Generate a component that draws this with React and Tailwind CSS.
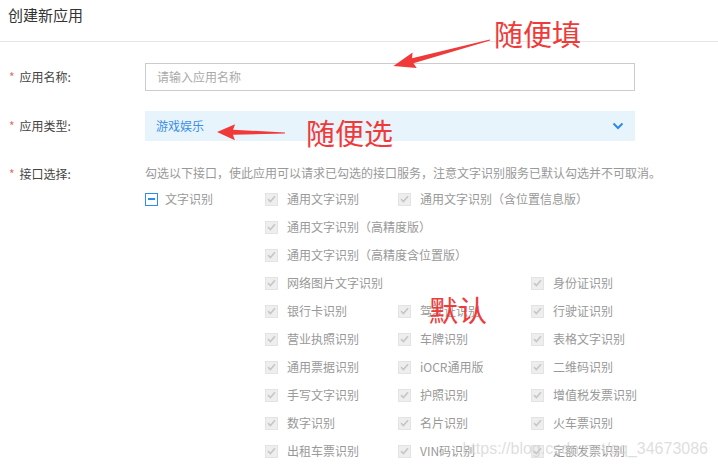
import React from 'react';

const rows = [
  ['通用文字识别', '通用文字识别（含位置信息版）', null],
  ['通用文字识别（高精度版）', null, null],
  ['通用文字识别（高精度含位置版）', null, null],
  ['网络图片文字识别', null, '身份证识别'],
  ['银行卡识别', '驾驶证识别', '行驶证识别'],
  ['营业执照识别', '车牌识别', '表格文字识别'],
  ['通用票据识别', 'iOCR通用版', '二维码识别'],
  ['手写文字识别', '护照识别', '增值税发票识别'],
  ['数字识别', '名片识别', '火车票识别'],
  ['出租车票识别', 'VIN码识别', '定额发票识别'],
];

const CheckedBox = () => (
  <span className="w-[13px] h-[13px] shrink-0 bg-[#eeeeee] border border-[#e3e3e3] flex items-center justify-center">
    <svg width="9" height="8" viewBox="0 0 9 8">
      <path d="M1 4.2 L3.4 6.5 L8 1.3" fill="none" stroke="#c6c6c6" strokeWidth="1.6" />
    </svg>
  </span>
);

// arrow drawn along +x from tail, then rotated into place
const Arrow = ({ x, y, len, angle, head = 20, half = 8 }) => (
  <polygon
    transform={`translate(${x} ${y}) rotate(${angle})`}
    points={`0,-0.6 ${len - head + 2},-2.6 ${len - head},-${half} ${len},0 ${len - head},${half} ${len - head + 2},2.6 0,0.6`}
    fill="#f03a3a"
  />
);

const Label = ({ children }) => (
  <div className="w-[136px] shrink-0 flex items-center text-[12px] text-[#444]">
    <span className="text-[#e96a6a] mr-[5px]">*</span>
    {children}
  </div>
);

export default function App() {
  return (
    <div className="relative w-[718px] h-[468px] overflow-hidden bg-white font-['Noto_Sans_CJK_SC',sans-serif]">
      {/* header */}
      <div className="h-[42px] border-b border-[#e6e6e6] flex items-center pl-[8px]">
        <h1 className="text-[15px] text-[#333] leading-none -mt-[12px]">创建新应用</h1>
      </div>

      <div className="pl-[9px]">
        {/* name */}
        <div className="flex mt-[21px] h-[28px]">
          <Label>应用名称:</Label>
          <div className="w-[490px] h-[28px] border border-[#cccccc] flex items-center px-[11px] text-[12px] text-[#aaa]">
            请输入应用名称
          </div>
        </div>

        {/* type */}
        <div className="flex mt-[20px] h-[30px]">
          <Label>应用类型:</Label>
          <div className="w-[490px] h-[30px] bg-[#e8f4fc] flex items-center justify-between pl-[11px] pr-[11px] text-[12px] text-[#3a8ee6]">
            <span>游戏娱乐</span>
            <svg width="12" height="8" viewBox="0 0 12 8">
              <path d="M1.5 1.5 L6 6 L10.5 1.5" fill="none" stroke="#2e8ae6" strokeWidth="2" />
            </svg>
          </div>
        </div>

        {/* apis */}
        <div className="flex mt-[22px]">
          <div className="h-[22px] flex">
            <Label>接口选择:</Label>
          </div>
          <div className="flex-1">
            <p className="text-[12px] leading-[20px] text-[#999] whitespace-nowrap">
              勾选以下接口，使此应用可以请求已勾选的接口服务，注意文字识别服务已默认勾选并不可取消。
            </p>
            <div className="flex mt-[2px]">
              <div className="w-[120px] shrink-0 h-[28px] flex items-center">
                <span className="w-[13px] h-[13px] border border-[#2d8cf0] bg-white flex items-center justify-center">
                  <span className="w-[7px] h-[2px] bg-[#2d8cf0]" />
                </span>
                <span className="ml-[7px] text-[12px] text-[#999]">文字识别</span>
              </div>
              <div>
                {rows.map((row, i) => (
                  <div key={i} className="flex h-[28px]">
                    {row.map((cell, j) => (
                      <div key={j} className="w-[133px] shrink-0 flex items-center whitespace-nowrap">
                        {cell && (
                          <>
                            <CheckedBox />
                            <span className="ml-[9px] text-[12px] text-[#999]">{cell}</span>
                          </>
                        )}
                      </div>
                    ))}
                  </div>
                ))}
              </div>
            </div>
          </div>
        </div>
      </div>

      {/* annotations */}
      <svg className="absolute inset-0 pointer-events-none" width="718" height="468">
        <Arrow x={490} y={40} len={100} angle={165} head={22} half={8} />
        <Arrow x={285} y={133} len={68} angle={180.8} head={18} half={8} />
      </svg>
      <span className="absolute left-[494px] top-[13px] text-[29px] leading-[40px] text-[#f03a3a]">随便填</span>
      <span className="absolute left-[306px] top-[112px] text-[29px] leading-[40px] text-[#f03a3a]">随便选</span>
      <span className="absolute left-[429px] top-[289px] text-[29px] leading-[40px] text-[#f03a3a]">默认</span>

      <span className="absolute right-[10px] top-[437px] text-[16px] text-[#cfcfcf]/70 font-['Liberation_Sans',sans-serif]">
        https://blog.csdn.net/qq_34673086
      </span>
    </div>
  );
}
